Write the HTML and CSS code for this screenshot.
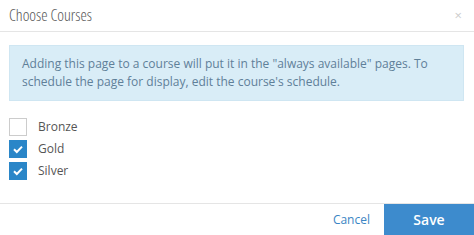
FILE: index.html
```html
<!DOCTYPE html>
<html>
<head>
<meta charset="utf-8">
<link rel="stylesheet" href="styles.css">
</head>
<body>
<div class="modal">
  <div class="modal-header">
    <h1 class="title">Choose Courses</h1>
    <span class="close">×</span>
  </div>
  <div class="modal-body">
    <div class="alert">Adding this page to a course will put it in the "always available" pages. To schedule the page for display, edit the course's schedule.</div>
    <ul class="options">
      <li class="option"><span class="box"></span><span class="label">Bronze</span></li>
      <li class="option"><span class="box checked"><svg viewBox="0 0 18 18" width="18" height="18"><path d="M5 9.2 L7.8 12 L13 6.6" fill="none" stroke="#fff" stroke-width="2"/></svg></span><span class="label">Gold</span></li>
      <li class="option"><span class="box checked"><svg viewBox="0 0 18 18" width="18" height="18"><path d="M5 9.2 L7.8 12 L13 6.6" fill="none" stroke="#fff" stroke-width="2"/></svg></span><span class="label">Silver</span></li>
    </ul>
  </div>
  <div class="modal-footer">
    <button class="btn-cancel">Cancel</button>
    <button class="btn-save">Save</button>
  </div>
</div>
</body>
</html>
```
FILE: styles.css
```css
html, body {
  margin: 0;
  padding: 0;
  background: #fff;
}
body {
  font-family: "Open Sans", "DejaVu Sans", sans-serif;
  width: 474px;
  height: 235px;
  overflow: hidden;
}
.modal {
  display: flex;
  flex-direction: column;
  height: 235px;
}
.modal-header {
  height: 32px;
  box-sizing: border-box;
  border-bottom: 1px solid #e5e5e5;
  display: flex;
  align-items: center;
  justify-content: space-between;
  padding: 0 12px 2px 9px;
}
.title {
  margin: 0;
  font-size: 16px;
  font-weight: 300;
  font-stretch: 75%;
  color: #555;
}
.close {
  color: #ccc;
  font-size: 13px;
}
.modal-body {
  padding: 13px 10px 0 9px;
  flex: 1;
}
.alert {
  background: #d9edf7;
  border: 1px solid #cfe6f2;
  color: #5f8099;
  font-size: 12px;
  line-height: 18px;
  padding: 9px 12px 9px 12px;
  height: 56px;
  box-sizing: border-box;
}
.options {
  list-style: none;
  margin: 15px 0 0 0;
  padding: 0;
}
.option {
  display: flex;
  align-items: center;
  height: 22px;
}
.box {
  width: 18px;
  height: 18px;
  box-sizing: border-box;
  border: 1px solid #ccc;
  background: #fff;
  display: flex;
}
.box.checked {
  background: #2a86c8;
  border-color: #2a86c8;
}
.box svg {
  margin: -1px;
}
.label {
  margin-left: 11px;
  font-size: 12px;
  color: #555;
  position: relative;
  top: -1px;
}
.modal-footer {
  height: 31px;
  border-top: 1px solid #e5e5e5;
  display: flex;
  justify-content: flex-end;
  align-items: stretch;
}
.btn-cancel {
  background: none;
  border: none;
  color: #3a85c4;
  font-family: inherit;
  font-size: 12px;
  padding: 0;
  margin-right: 14px;
}
.btn-save {
  background: #3d8bcd;
  border: none;
  color: #fff;
  font-family: inherit;
  font-size: 14px;
  font-weight: 600;
  width: 90px;
  padding: 0;
}
```
